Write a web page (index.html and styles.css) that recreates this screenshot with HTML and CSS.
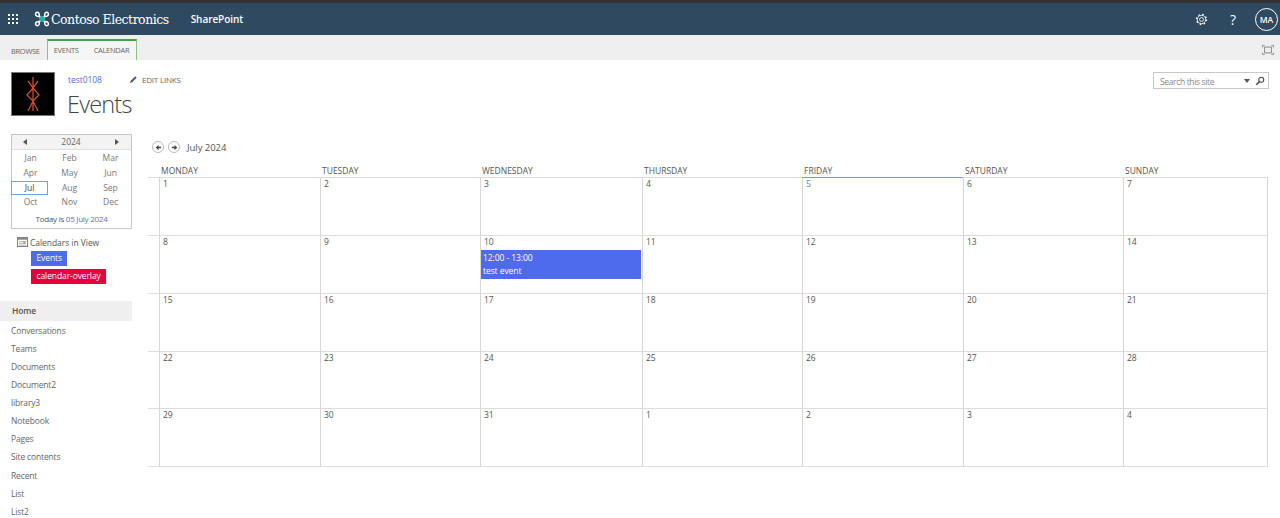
FILE: index.html
```html
<!DOCTYPE html>
<html lang="en">
<head>
<meta charset="utf-8">
<title>Events</title>
<link rel="stylesheet" href="styles.css">
</head>
<body>
<header class="suite">
  <div class="waffle" aria-hidden="true"><i></i><i></i><i></i><i></i><i></i><i></i><i></i><i></i><i></i></div>
  <svg class="logo" viewBox="0 0 16 16" aria-hidden="true">
    <path d="M5 5 11 5 11 11 5 11Z" fill="#2aa7a7"/>
    <path d="M5.500 5.500C3 5.800 1.200 4.500 1.600 2.700 2 1 4.600.8 5.100 2.600 5.400 3.600 5.200 4.600 5.500 5.500ZM10.500 5.500C13 5.800 14.800 4.500 14.400 2.700 14 1 11.400.8 10.900 2.600 10.600 3.600 10.800 4.600 10.500 5.500ZM5.500 10.500C3 10.200 1.200 11.500 1.600 13.300 2 15 4.600 15.200 5.100 13.400 5.400 12.400 5.200 11.400 5.500 10.500ZM10.500 10.500C13 10.200 14.800 11.500 14.400 13.300 14 15 11.400 15.200 10.900 13.400 10.600 12.400 10.800 11.400 10.500 10.500Z" fill="none" stroke="#fff" stroke-width="1.500"/>
  </svg>
  <span class="brand">Contoso Electronics</span>
  <span class="product">SharePoint</span>
  <div class="suite-right">
    <svg class="gear" viewBox="0 0 16 16" aria-hidden="true">
      <circle cx="8" cy="8" r="2.400" fill="none" stroke="#fff" stroke-width="1"/>
      <circle cx="8" cy="8" r="5" fill="none" stroke="#fff" stroke-width="1"/>
      <circle cx="8" cy="8" r="6.200" fill="none" stroke="#fff" stroke-width="1.600" stroke-dasharray="2 2.870"/>
    </svg>
    <span class="help">?</span>
    <span class="avatar">MA</span>
  </div>
</header>

<nav class="ribbon">
  <span class="rtab">BROWSE</span>
  <div class="rgroup"><span class="rtab">EVENTS</span><span class="rtab">CALENDAR</span></div>
  <svg class="focus" viewBox="0 0 14 12" aria-hidden="true">
    <path d="M.5 3V.5H3M11 .5h2.500V3M13.500 9v2.500H11M3 11.500H.5V9" fill="none" stroke="#777"/>
    <rect x="3" y="2.500" width="8" height="7" fill="none" stroke="#777"/>
  </svg>
</nav>

<section class="site-head">
  <div class="site-logo">
    <svg viewBox="0 0 42 42" aria-hidden="true">
      <path d="M21 4V38M16 8 21 15 26 8M21 15 15 22 21 28 27 22ZM21 28 16 38M21 28 26 38" fill="none" stroke="#c8502c" stroke-width="1.300"/>
    </svg>
  </div>
  <div class="site-title">
    <div class="crumbs">
      <a class="site-link">test0108</a>
      <span class="edit">
        <svg viewBox="0 0 10 10" aria-hidden="true"><path d="M1 9 2 6.500 7 1.500 8.500 3 3.500 8Z" fill="#555"/></svg>
        EDIT LINKS
      </span>
    </div>
    <h1>Events</h1>
  </div>
  <div class="search">
    <span class="search-text">Search this site</span>
    <span class="caret"></span>
    <svg viewBox="0 0 12 12" aria-hidden="true"><circle cx="7.500" cy="4.500" r="3" fill="none" stroke="#444" stroke-width="1.300"/><path d="M5.500 6.500 1.500 10.500" stroke="#444" stroke-width="1.800"/></svg>
  </div>
</section>

<div class="main">
  <aside class="side">
    <div class="picker">
      <div class="picker-year"><span class="arrow left"></span><span>2024</span><span class="arrow right"></span></div>
      <div class="months">
        <span>Jan</span><span>Feb</span><span>Mar</span>
        <span>Apr</span><span>May</span><span>Jun</span>
        <span class="current">Jul</span><span>Aug</span><span>Sep</span>
        <span>Oct</span><span>Nov</span><span>Dec</span>
      </div>
      <div class="today">Today is <a>05 July 2024</a></div>
    </div>
    <div class="civ">
      <svg viewBox="0 0 12 11" aria-hidden="true"><rect x=".5" y=".5" width="11" height="10" fill="#fff" stroke="#777"/><rect x="1" y="1" width="10" height="2" fill="#888"/><path d="M2 5h8M2 7h8M2 9h8" stroke="#aaa"/><rect x="7" y="5" width="2" height="2" fill="#d98b4a"/></svg>
      Calendars in View
    </div>
    <div class="chips">
      <span class="chip blue">Events</span>
      <span class="chip red">calendar-overlay</span>
    </div>
    <ul class="quick">
      <li class="sel">Home</li>
      <li>Conversations</li>
      <li>Teams</li>
      <li>Documents</li>
      <li>Document2</li>
      <li>library3</li>
      <li>Notebook</li>
      <li>Pages</li>
      <li>Site contents</li>
      <li>Recent</li>
      <li>List</li>
      <li>List2</li>
    </ul>
  </aside>

  <main class="cal">
    <div class="cal-nav">
      <span class="round"><svg viewBox="0 0 8 8" aria-hidden="true"><path d="M7 3.200H4V1L.8 4 4 7V4.800H7Z" fill="#444"/></svg></span>
      <span class="round"><svg viewBox="0 0 8 8" aria-hidden="true"><path d="M1 3.200H4V1L7.200 4 4 7V4.800H1Z" fill="#444"/></svg></span>
      <span class="cal-title">July 2024</span>
    </div>
    <div class="grid">
      <div class="stub-h"></div>
      <div class="dow">MONDAY</div><div class="dow">TUESDAY</div><div class="dow">WEDNESDAY</div><div class="dow">THURSDAY</div><div class="dow">FRIDAY</div><div class="dow">SATURDAY</div><div class="dow">SUNDAY</div>

      <div class="stub"></div>
      <div class="day">1</div><div class="day">2</div><div class="day">3</div><div class="day">4</div><div class="day is-today">5</div><div class="day">6</div><div class="day last">7</div>

      <div class="stub"></div>
      <div class="day">8</div><div class="day">9</div>
      <div class="day">10<div class="event"><div>12:00 - 13:00</div><div>test event</div></div></div>
      <div class="day">11</div><div class="day">12</div><div class="day">13</div><div class="day last">14</div>

      <div class="stub"></div>
      <div class="day">15</div><div class="day">16</div><div class="day">17</div><div class="day">18</div><div class="day">19</div><div class="day">20</div><div class="day last">21</div>

      <div class="stub"></div>
      <div class="day">22</div><div class="day">23</div><div class="day">24</div><div class="day">25</div><div class="day">26</div><div class="day">27</div><div class="day last">28</div>

      <div class="stub"></div>
      <div class="day">29</div><div class="day">30</div><div class="day">31</div><div class="day">1</div><div class="day">2</div><div class="day">3</div><div class="day last">4</div>
    </div>
  </main>
</div>
</body>
</html>
```
FILE: styles.css
```css
* { box-sizing: border-box; }
html, body { margin: 0; padding: 0; height: 100%; overflow: hidden; background: #fff; }
body { font-family: "Open Sans", "Noto Sans", sans-serif; font-size: 8.500px; color: #555; }

.suite {
  height: 35px;
  border-top: 3px solid #333;
  background: #2f4a60;
  color: #fff;
  display: flex;
  align-items: center;
}
.waffle {
  display: grid;
  grid-template-columns: repeat(3, 2px);
  gap: 2px;
  margin-left: 8px;
  width: 10px;
}
.waffle i { width: 2px; height: 2px; background: #fff; }
.logo { width: 16px; height: 16px; margin-left: 16px; }
.brand { font-family: "DejaVu Serif", serif; font-size: 12.500px; margin-left: 1px; letter-spacing: -.5px; white-space: nowrap; }
.product { font-weight: 600; font-size: 10px; margin-left: 22px; letter-spacing: -.05px; }
.suite-right { margin-left: auto; display: flex; align-items: center; }
.gear { width: 13px; height: 13px; }
.help { font-size: 14px; margin-left: 22px; font-weight: 400; width: 8px; }
.avatar {
  width: 23px; height: 23px; border: 1px solid #fff; border-radius: 50%;
  margin: 0 2px 0 17px;
  display: flex; align-items: center; justify-content: center;
  font-size: 8.500px; font-weight: 600;
}

.ribbon {
  height: 25px;
  background: #efefef;
  display: flex;
  align-items: stretch;
  padding-left: 11px;
}
.rtab { font-size: 7.500px; letter-spacing: -.3px; color: #666; line-height: 20px; padding-top: 6px; }
.ribbon > .rtab { margin-right: 7px; }
.rgroup {
  display: flex;
  gap: 15px;
  padding: 0 7px 0 6px;
  margin-top: 4px;
  height: 21px;
  border: 1px solid #8cc08c;
  border-top: 2px solid #3fa34d;
  border-bottom: 0;
  background: #f6f6f6;
}
.rgroup .rtab { line-height: 17px; padding-top: 1px; }
.focus { width: 12px; height: 10px; margin: 10px 6px 0 auto; }

.site-head { height: 69px; display: flex; padding: 12px 11px 0 11px; position: relative; }
.site-logo { width: 44px; height: 44px; background: #000; border: 1px solid #777; }
.site-logo svg { width: 42px; height: 42px; display: block; }
.site-title { margin-left: 13px; }
.crumbs { display: flex; align-items: center; height: 14px; }
.site-link { color: #5b6ee1; font-size: 8.500px; letter-spacing: -.05px; }
.edit { display: flex; align-items: center; gap: 4px; margin-left: 27px; font-size: 8px; letter-spacing: -.2px; color: #666; }
.edit svg { width: 9px; height: 9px; }
h1 { margin: 3px 0 0 -1px; font-weight: 300; font-size: 23.500px; letter-spacing: -.8px; line-height: 30px; color: #444; }
.search {
  margin-left: auto; width: 116px; height: 17px;
  border: 1px solid #c8c8c8; display: flex; align-items: center; padding: 1px 3px 0 6px;
}
.search-text { font-size: 8.500px; letter-spacing: -.35px; color: #888; flex: 1; }
.caret { border-left: 3.500px solid transparent; border-right: 3.500px solid transparent; border-top: 4px solid #555; margin-right: 5px; }
.search svg { width: 10px; height: 10px; }

.main { display: flex; }
.side { width: 132px; flex: none; }
.picker { width: 121px; margin-left: 11px; border: 1px solid #c6c6c6; height: 95px; margin-top: 5px; }
.picker-year {
  height: 15px; background: #f3f3f3; border-bottom: 1px solid #ddd;
  display: flex; align-items: center; justify-content: space-between;
  padding: 0 12px 1px 11px; font-size: 8.500px; color: #666;
}
.arrow { width: 0; height: 0; border-top: 3px solid transparent; border-bottom: 3px solid transparent; }
.arrow.left { border-right: 4px solid #555; }
.arrow.right { border-left: 4px solid #555; }
.months { display: grid; grid-template-columns: 37px 41px 41px; padding-top: 1px; }
.months span { height: 14.800px; line-height: 14.800px; text-align: center; font-size: 8.500px; color: #777; }
.months .current { border: 1px solid #6aa9dc; color: #444; line-height: 12.800px; width: 37px; margin-left: -1px; }
.today { text-align: center; font-size: 8px; letter-spacing: -.25px; margin-top: 3px; color: #555; }
.today a { color: #5b6ee1; }

.civ { display: flex; align-items: center; gap: 2px; margin: 6px 0 0 17px; font-size: 8.500px; letter-spacing: -.05px; height: 14px; color: #555; }
.civ svg { width: 11px; height: 10px; }
.chips { display: flex; flex-direction: column; align-items: flex-start; gap: 3px; margin: 2px 0 0 31px; }
.chip { height: 15px; line-height: 14px; padding: 0 5.500px; color: #fff; font-size: 8.500px; letter-spacing: -.1px; }
.chip.blue { background: #4f6bed; }
.chip.red { background: #e8003c; }

.quick { list-style: none; margin: 17px 0 0; padding: 0; }
.quick li { height: 18.150px; line-height: 18px; padding-left: 11px; font-size: 8.500px; letter-spacing: -.15px; color: #666; }
.quick .sel { height: 20px; line-height: 20px; margin-bottom: .5px; background: #efefef; font-weight: 600; padding-left: 12px; color: #555; }

.cal { flex: 1; min-width: 0; padding: 0 0 0 16px; }
.cal-nav { display: flex; align-items: center; height: 14px; margin-top: 11px; padding-left: 4px; gap: 4px; }
.round { width: 12px; height: 12px; border: 1px solid #bbb; border-radius: 50%; display: flex; align-items: center; justify-content: center; }
.round svg { width: 7px; height: 7px; }
.cal-title { font-size: 9.500px; letter-spacing: -.05px; margin-left: 3px; color: #555; }

.grid {
  display: grid;
  width: 1120px;
  margin-top: 11px;
  grid-template-columns: 11px 161px 160px 162px 160px 161px 160px 145px;
  grid-template-rows: 13px 58px 58px 58px 57px 58px;
}
.stub-h { border-bottom: 1px solid #ddd; }
.dow { font-size: 8.500px; color: #555; padding-left: 2px; line-height: 11px; border-bottom: 1px solid #ddd; white-space: nowrap; }
.dow:nth-child(6) { border-bottom-color: #7f8fd8; }
.stub { border-bottom: 1px solid #ddd; }
.day { border-left: 1px solid #d6d6d6; border-bottom: 1px solid #ddd; padding: 0 0 0 3px; font-size: 8.500px; line-height: 11px; color: #555; min-width: 0; }
.day.last { border-right: 1px solid #d6d6d6; }
.day.is-today { color: #5b7fd6; }
.event {
  margin: 3px 1px 0 -3px;
  height: 29px;
  background: #4f6bed;
  color: #fff;
  padding: 1px 2px;
  line-height: 13px;
  letter-spacing: -.08px;
}
```
